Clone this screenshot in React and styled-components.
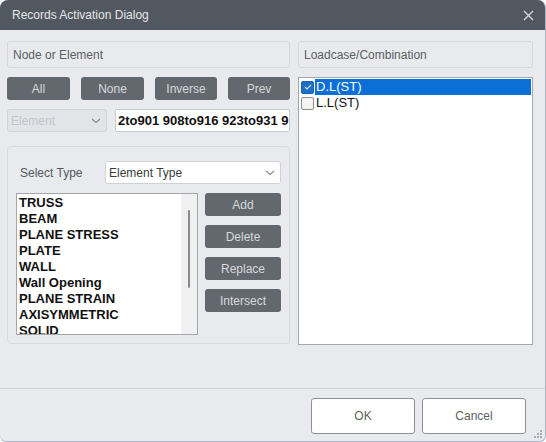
import React from "react";
import styled, { createGlobalStyle } from "styled-components";

const GlobalStyle = createGlobalStyle`
  html, body {
    margin: 0;
    padding: 0;
    background: #ffffff;
  }
  body {
    font-family: "Liberation Sans", Arial, sans-serif;
  }
`;

const elementTypes = [
  "TRUSS",
  "BEAM",
  "PLANE STRESS",
  "PLATE",
  "WALL",
  "Wall Opening",
  "PLANE STRAIN",
  "AXISYMMETRIC",
  "SOLID",
];

const loadcases = [
  { name: "D.L(ST)", checked: true },
  { name: "L.L(ST)", checked: false },
];

const Chevron = ({ color = "#8a8d93" }) => (
  <svg width="10" height="6" viewBox="0 0 10 6">
    <path d="M1 1 L5 4.5 L9 1" fill="none" stroke={color} strokeWidth="1.2" />
  </svg>
);

const CloseIcon = () => (
  <svg width="11" height="11" viewBox="0 0 11 11">
    <path d="M1 1 L10 10 M10 1 L1 10" stroke="#d9dbdf" strokeWidth="1.3" />
  </svg>
);

const Grip = () => (
  <svg width="10" height="10" viewBox="0 0 10 10">
    <g fill="#a9adb4">
      <rect x="8" y="2" width="2" height="2" />
      <rect x="5" y="5" width="2" height="2" />
      <rect x="8" y="5" width="2" height="2" />
      <rect x="2" y="8" width="2" height="2" />
      <rect x="5" y="8" width="2" height="2" />
      <rect x="8" y="8" width="2" height="2" />
    </g>
  </svg>
);

const Dialog = styled.div`
  position: relative;
  width: 545px;
  height: 441px;
  display: flex;
  flex-direction: column;
  background: #e9eaee;
  border-right: 1px solid #aeb6c6;
  border-bottom: 1px solid #aeb6c6;
  border-radius: 8px 8px 6px 6px;
  overflow: hidden;
`;

const TitleBar = styled.div`
  height: 30px;
  flex: none;
  display: flex;
  align-items: center;
  justify-content: space-between;
  padding: 0 11px 0 12px;
  background: #525860;
  color: #e4e6e9;
  font-size: 12px;
`;

const Body = styled.div`
  flex: 1;
  display: flex;
  gap: 8px;
  padding: 11px 12px 0 7px;
`;

const Column = styled.div`
  width: ${(p) => p.$width}px;
  flex: none;
  display: flex;
  flex-direction: column;
`;

const Header = styled.div`
  height: 25px;
  display: flex;
  align-items: center;
  padding-left: 5px;
  border: 1px solid #d6d8dd;
  border-radius: 3px;
  color: #5b5e63;
  font-size: 12px;
`;

const ButtonRow = styled.div`
  display: flex;
  justify-content: space-between;
  margin-top: 9px;
`;

const DarkButton = styled.div`
  width: ${(p) => p.$width || 63}px;
  height: 23px;
  display: flex;
  align-items: center;
  justify-content: center;
  background: #63686f;
  border-radius: 3px;
  color: #d6d8db;
  font-size: 12px;
`;

const InputRow = styled.div`
  display: flex;
  gap: 8px;
  margin-top: 9px;
`;

const Select = styled.div`
  box-sizing: border-box;
  width: ${(p) => p.$width}px;
  height: 23px;
  display: flex;
  align-items: center;
  justify-content: space-between;
  padding: 0 5px 0 3px;
  border: 1px solid ${(p) => (p.$disabled ? "#d2d4d8" : "#cfd1d5")};
  border-radius: 3px;
  background: ${(p) => (p.$disabled ? "#e3e4e8" : "#ffffff")};
  color: ${(p) => (p.$disabled ? "#c3c5ca" : "#3a3c40")};
  font-size: 12px;
`;

const TextInput = styled.div`
  box-sizing: border-box;
  flex: 1;
  height: 23px;
  display: flex;
  align-items: center;
  padding-left: 2px;
  border: 1px solid #c9cbd0;
  border-radius: 2px;
  background: #ffffff;
  color: #111111;
  font-size: 13px;
  font-weight: bold;
  white-space: nowrap;
  overflow: hidden;
`;

const Group = styled.div`
  box-sizing: border-box;
  height: 198px;
  margin-top: 14px;
  padding: 14px 8px 0 8px;
  border: 1px solid #d9dbdf;
  border-radius: 4px;
`;

const TypeRow = styled.div`
  display: flex;
  align-items: center;
  justify-content: space-between;
`;

const Label = styled.span`
  padding-left: 4px;
  color: #55585d;
  font-size: 12px;
`;

const ListRow = styled.div`
  display: flex;
  gap: 7px;
  margin-top: 9px;
`;

const TypeList = styled.div`
  box-sizing: border-box;
  width: 184px;
  height: 142px;
  display: flex;
  border: 1px solid #a3a6ab;
  background: #ffffff;
  overflow: hidden;
`;

const Items = styled.div`
  flex: 1;
  padding: 1px 0 0 2px;
`;

const Item = styled.div`
  height: 16px;
  line-height: 16px;
  color: #111111;
  font-size: 13px;
  font-weight: bold;
  white-space: nowrap;
`;

const ScrollTrack = styled.div`
  width: 16px;
  flex: none;
  display: flex;
  justify-content: center;
  padding-top: 16px;
  background: #f0f0f0;
`;

const ScrollThumb = styled.div`
  width: 2px;
  height: 78px;
  background: #8a8c90;
  border-radius: 1px;
`;

const SideButtons = styled.div`
  display: flex;
  flex-direction: column;
  gap: 9px;
`;

const CaseList = styled.div`
  box-sizing: border-box;
  height: 268px;
  margin-top: 9px;
  padding: 1px 1px 0 1px;
  border: 1px solid #a3a6ab;
  background: #ffffff;
`;

const CaseRow = styled.div`
  height: 16px;
  display: flex;
  align-items: center;
  gap: 1px;
  font-size: 13px;
`;

const Check = styled.div`
  box-sizing: border-box;
  width: 13px;
  height: 13px;
  margin-left: 1px;
  display: flex;
  align-items: center;
  justify-content: center;
  border: 1px solid ${(p) => (p.$checked ? "#1b5fb0" : "#8b8e93")};
  border-radius: 2px;
  background: ${(p) => (p.$checked ? "#1e6fc8" : "#f4f4f4")};
`;

const CaseName = styled.span`
  flex: 1;
  height: 16px;
  line-height: 16px;
  padding-left: 1px;
  background: ${(p) => (p.$selected ? "#0a6fd6" : "transparent")};
  color: ${(p) => (p.$selected ? "#ffffff" : "#111111")};
`;

const Footer = styled.div`
  height: 53px;
  flex: none;
  display: flex;
  justify-content: flex-end;
  gap: 7px;
  padding: 9px 19px 0 0;
  box-sizing: border-box;
  border-top: 1px solid #d1d3d8;
`;

const LightButton = styled.div`
  box-sizing: border-box;
  width: 104px;
  height: 36px;
  display: flex;
  align-items: center;
  justify-content: center;
  border: 1px solid #8d9096;
  border-radius: 3px;
  background: #ffffff;
  color: #5c5f64;
  font-size: 12px;
`;

const GripCorner = styled.div`
  position: absolute;
  right: 3px;
  bottom: 3px;
  display: flex;
`;

export default function App() {
  return (
    <>
      <GlobalStyle />
      <Dialog>
        <TitleBar>
          <span>Records Activation Dialog</span>
          <CloseIcon />
        </TitleBar>
        <Body>
          <Column $width={283}>
            <Header>Node or Element</Header>
            <ButtonRow>
              <DarkButton>All</DarkButton>
              <DarkButton>None</DarkButton>
              <DarkButton $width={62}>Inverse</DarkButton>
              <DarkButton $width={62}>Prev</DarkButton>
            </ButtonRow>
            <InputRow>
              <Select $width={100} $disabled>
                <span>Element</span>
                <Chevron />
              </Select>
              <TextInput>2to901 908to916 923to931 919</TextInput>
            </InputRow>
            <Group>
              <TypeRow>
                <Label>Select Type</Label>
                <Select $width={176}>
                  <span>Element Type</span>
                  <Chevron />
                </Select>
              </TypeRow>
              <ListRow>
                <TypeList>
                  <Items>
                    {elementTypes.map((t) => (
                      <Item key={t}>{t}</Item>
                    ))}
                  </Items>
                  <ScrollTrack>
                    <ScrollThumb />
                  </ScrollTrack>
                </TypeList>
                <SideButtons>
                  <DarkButton $width={76}>Add</DarkButton>
                  <DarkButton $width={76}>Delete</DarkButton>
                  <DarkButton $width={76}>Replace</DarkButton>
                  <DarkButton $width={76}>Intersect</DarkButton>
                </SideButtons>
              </ListRow>
            </Group>
          </Column>
          <Column $width={235}>
            <Header>Loadcase/Combination</Header>
            <CaseList>
              {loadcases.map((c) => (
                <CaseRow key={c.name}>
                  <Check $checked={c.checked}>
                    {c.checked && (
                      <svg width="8" height="6" viewBox="0 0 8 6">
                        <path d="M1 3 L3 5 L7 1" fill="none" stroke="#cfe1f7" strokeWidth="1.1" />
                      </svg>
                    )}
                  </Check>
                  <CaseName $selected={c.checked}>{c.name}</CaseName>
                </CaseRow>
              ))}
            </CaseList>
          </Column>
        </Body>
        <Footer>
          <LightButton>OK</LightButton>
          <LightButton>Cancel</LightButton>
        </Footer>
        <GripCorner>
          <Grip />
        </GripCorner>
      </Dialog>
    </>
  );
}
